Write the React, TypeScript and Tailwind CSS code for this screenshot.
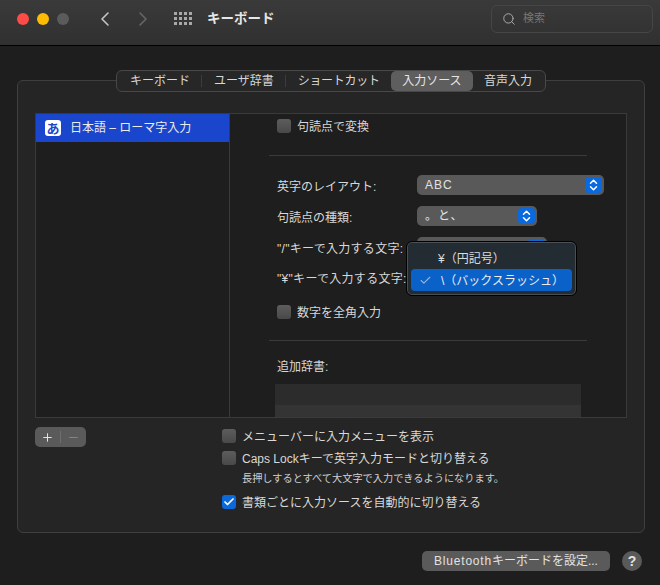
import React from 'react';
import { ChevronLeft, ChevronRight, Search, Check, Plus, Minus } from 'lucide-react';

const tabs = ['キーボード', 'ユーザ辞書', 'ショートカット', '入力ソース', '音声入力'];

// macOS style checkbox
const CheckBox: React.FC<{ checked?: boolean }> = ({ checked }) =>
  checked ? (
    <span className="flex h-[14px] w-[14px] shrink-0 items-center justify-center rounded-[3px] bg-[#0a69dc]">
      <Check className="h-[12px] w-[12px] text-white" strokeWidth={3.5} />
    </span>
  ) : (
    <span className="block h-[14px] w-[14px] shrink-0 rounded-[3px] bg-gradient-to-b from-[#5d5d5d] to-[#494949]" />
  );

const CheckRow: React.FC<{ label: string; checked?: boolean; className?: string }> = ({ label, checked, className }) => (
  <div className={`flex items-center gap-[6px] ${className ?? ''}`}>
    <CheckBox checked={checked} />
    <span className="pt-[3px] text-[12px] leading-[11px] text-[#d8d8d8]">{label}</span>
  </div>
);

// Blue stepper at the right of a popup button
const Stepper: React.FC = () => (
  <span className="flex h-[16px] w-[17px] shrink-0 items-center justify-center rounded-[4px] bg-[#0a69dc]">
    <svg width="9" height="12" viewBox="0 0 9 12" fill="none" stroke="#ffffff" strokeWidth="1.5" strokeLinecap="round" strokeLinejoin="round">
      <path d="M1.5 4.2 4.5 1.2l3 3" />
      <path d="M1.5 7.8l3 3 3-3" />
    </svg>
  </span>
);

const SelectRow: React.FC<{ label: string; value?: string; width: string; className?: string; labelClass?: string }> = ({ label, value, width, className, labelClass }) => (
  <div className={`flex h-[20px] items-center ${className ?? ''}`}>
    <span className={`w-[140px] whitespace-nowrap pt-[3px] text-[12px] leading-[16px] text-[#d8d8d8] ${labelClass ?? ''}`}>{label}</span>
    <div className={`flex h-[20px] items-center justify-between rounded-[5px] bg-[#595959] pl-[8px] pr-[2px] text-[12px] text-[#e2e2e2] ${width}`}>
      <span className="leading-[16px] tracking-[1px]">{value}</span>
      <Stepper />
    </div>
  </div>
);

export default function App() {
  return (
    <div className="flex h-[585px] w-[660px] flex-col overflow-hidden bg-[#1e1e1e] font-['Liberation_Sans','Noto_Sans_CJK_JP',sans-serif]">
      {/* title bar */}
      <div className="flex h-[46px] shrink-0 items-center border-b border-black bg-gradient-to-b from-[#3a3a3a] to-[#303030] pb-[8px] pl-[17px] pr-[7px]">
        <span className="h-[12px] w-[12px] rounded-full bg-[#fd4b47]" />
        <span className="ml-[8px] h-[12px] w-[12px] rounded-full bg-[#fdbb03]" />
        <span className="ml-[8px] h-[12px] w-[12px] rounded-full bg-[#5b5b5b]" />
        <ChevronLeft className="ml-[24px] h-[24px] w-[24px] text-[#c4c4c4]" strokeWidth={1.6} />
        <ChevronRight className="ml-[14px] h-[24px] w-[24px] text-[#666666]" strokeWidth={1.6} />
        <div className="ml-[19px] grid grid-cols-4 gap-x-[2px] gap-y-[2px]">
          {Array.from({ length: 12 }).map((_, i) => (
            <span key={i} className="h-[3px] w-[3px] bg-[#a8a8a8]" />
          ))}
        </div>
        <span className="ml-[15px] pt-[1px] text-[13.5px] font-bold text-[#e6e6e6]">キーボード</span>
        <div className="ml-auto flex h-[28px] w-[162px] items-center rounded-[6px] border border-[#464646] pl-[10px]">
          <Search className="h-[14px] w-[14px] text-[#b0b0b0]" strokeWidth={1.6} />
          <span className="ml-[7px] text-[11px] text-[#777777]">検索</span>
        </div>
      </div>

      {/* group box */}
      <div className="ml-[17px] mt-[34px] h-[453px] w-[628px] shrink-0 rounded-[6px] border border-[#3f3f3f] bg-[#252525] px-[17px]">
        <div className="-mt-[11px] flex justify-center">
          <div className="relative z-10 flex h-[22px] items-center rounded-[6px] border border-[#484848] bg-[#272727] px-[1px] text-[12px] text-[#d8d8d8]">
            {tabs.map((tab, i) => (
              <React.Fragment key={tab}>
                {tab === '入力ソース' ? (
                  <span className="flex h-[20px] items-center rounded-[5px] bg-[#5e5e5e] px-[11px] text-[#e6e6e6]">{tab}</span>
                ) : tab === 'ショートカット' ? (
                  <span className="px-[11.5px] tracking-[-0.3px]">{tab}</span>
                ) : (
                  <span className="px-[11.5px]">{tab}</span>
                )}
                {i < 2 && <span className="h-[12px] w-px bg-[#3c3c3c]" />}
              </React.Fragment>
            ))}
          </div>
        </div>

        {/* input source panel */}
        <div className="mt-[21px] flex h-[305px] w-[592px] border border-[#3a3a3a] bg-[#1e1e1e]">
          <div className="w-[194px] shrink-0 border-r border-[#3a3a3a]">
            <div className="flex h-[28px] items-center bg-[#1a46cd] pl-[9px]">
              <span className="flex h-[16px] w-[16px] items-center justify-center rounded-[3px] bg-white text-[13px] font-bold leading-none text-[#1a46cd]">あ</span>
              <span className="ml-[9px] text-[12px] text-[#ececec]">日本語 – ローマ字入力</span>
            </div>
          </div>

          <div className="relative min-w-0 flex-1 overflow-hidden pl-[39px]">
            <CheckRow label="句読点で変換" className="ml-[8px] mt-[5px]" />
            <div className="mt-[22px] h-px w-[318px] bg-[#3a3a3a]" />
            <SelectRow label="英字のレイアウト:" value="ABC" width="w-[187px]" className="ml-[8px] mt-[19px]" />
            <SelectRow label="句読点の種類:" value="。と、" width="w-[120px]" className="ml-[8px] mt-[11px]" />
            <SelectRow label={'"/"キーで入力する文字:'} width="w-[130px]" className="ml-[8px] mt-[11px]" labelClass="tracking-[0.3px]" />
            <div className="ml-[8px] mt-[12px] h-[20px] whitespace-nowrap text-[12px] leading-[20px] tracking-[0.3px] text-[#d8d8d8]">"¥"キーで入力する文字:</div>
            <CheckRow label="数字を全角入力" className="ml-[8px] mt-[16px]" />
            <div className="mt-[21px] h-px w-[318px] bg-[#3a3a3a]" />
            <div className="ml-[8px] mt-[18px] text-[12px] leading-[17px] text-[#d8d8d8]">追加辞書:</div>
            <div className="ml-[6px] mt-[8px] w-[306px]">
              <div className="h-[21px] bg-[#2c2c2c]" />
              <div className="h-[20px] bg-[#343434]" />
            </div>

            {/* open popup menu */}
            <div className="absolute left-[176px] top-[127px] z-20 h-[55px] w-[171px] rounded-[6px] border border-black bg-[#232c33] p-[4px] shadow-[inset_0_0_0_1px_#4a4f54]">
              <div className="flex h-[23px] items-center pl-[27px] pt-[3px] text-[12px] text-[#dcdcdc]">¥（円記号）</div>
              <div className="flex h-[22px] items-center rounded-[4px] bg-[#0a62c8] pl-[8px] pt-[1px] text-[12px] text-[#ececec]">
                <Check className="h-[13px] w-[13px] text-[#8fb6e6]" strokeWidth={2} />
                <span className="ml-[9px]">\（バックスラッシュ）</span>
              </div>
            </div>
          </div>
        </div>

        {/* options under the panel */}
        <div className="mt-[9px] flex">
          <div className="flex h-[20px] w-[51px] items-center rounded-[5px] bg-[#5a5a5a] text-[#e6e6e6]">
            <span className="flex w-[25px] justify-center">
              <Plus className="h-[13px] w-[13px]" strokeWidth={1.8} />
            </span>
            <span className="h-[12px] w-px bg-[#6e6e6e]" />
            <span className="flex flex-1 justify-center">
              <Minus className="h-[13px] w-[13px] text-[#8e8e8e]" strokeWidth={1.5} />
            </span>
          </div>
          <div className="ml-[136px] pt-[2px]">
            <CheckRow label="メニューバーに入力メニューを表示" />
            <CheckRow label="Caps Lockキーで英字入力モードと切り替える" className="mt-[8px]" />
            <div className="ml-[20px] mt-[6px] text-[10.2px] leading-[15px] text-[#d0d0d0]">長押しするとすべて大文字で入力できるようになります。</div>
            <CheckRow label="書類ごとに入力ソースを自動的に切り替える" checked className="mt-[9px]" />
          </div>
        </div>
      </div>

      {/* bottom buttons */}
      <div className="mt-[18px] flex items-center justify-end pr-[18px]">
        <div className="flex h-[20px] w-[188px] items-center justify-center rounded-[5px] bg-[#5a5a5a] text-[12px] text-[#e2e2e2]">
          <span className="tracking-[0.8px]">Bluetooth</span>
          <span>キーボードを設定...</span>
        </div>
        <div className="ml-[12px] flex h-[20px] w-[20px] items-center justify-center rounded-full bg-[#5a5a5a] text-[14px] font-bold text-[#e2e2e2]">?</div>
      </div>
    </div>
  );
}
